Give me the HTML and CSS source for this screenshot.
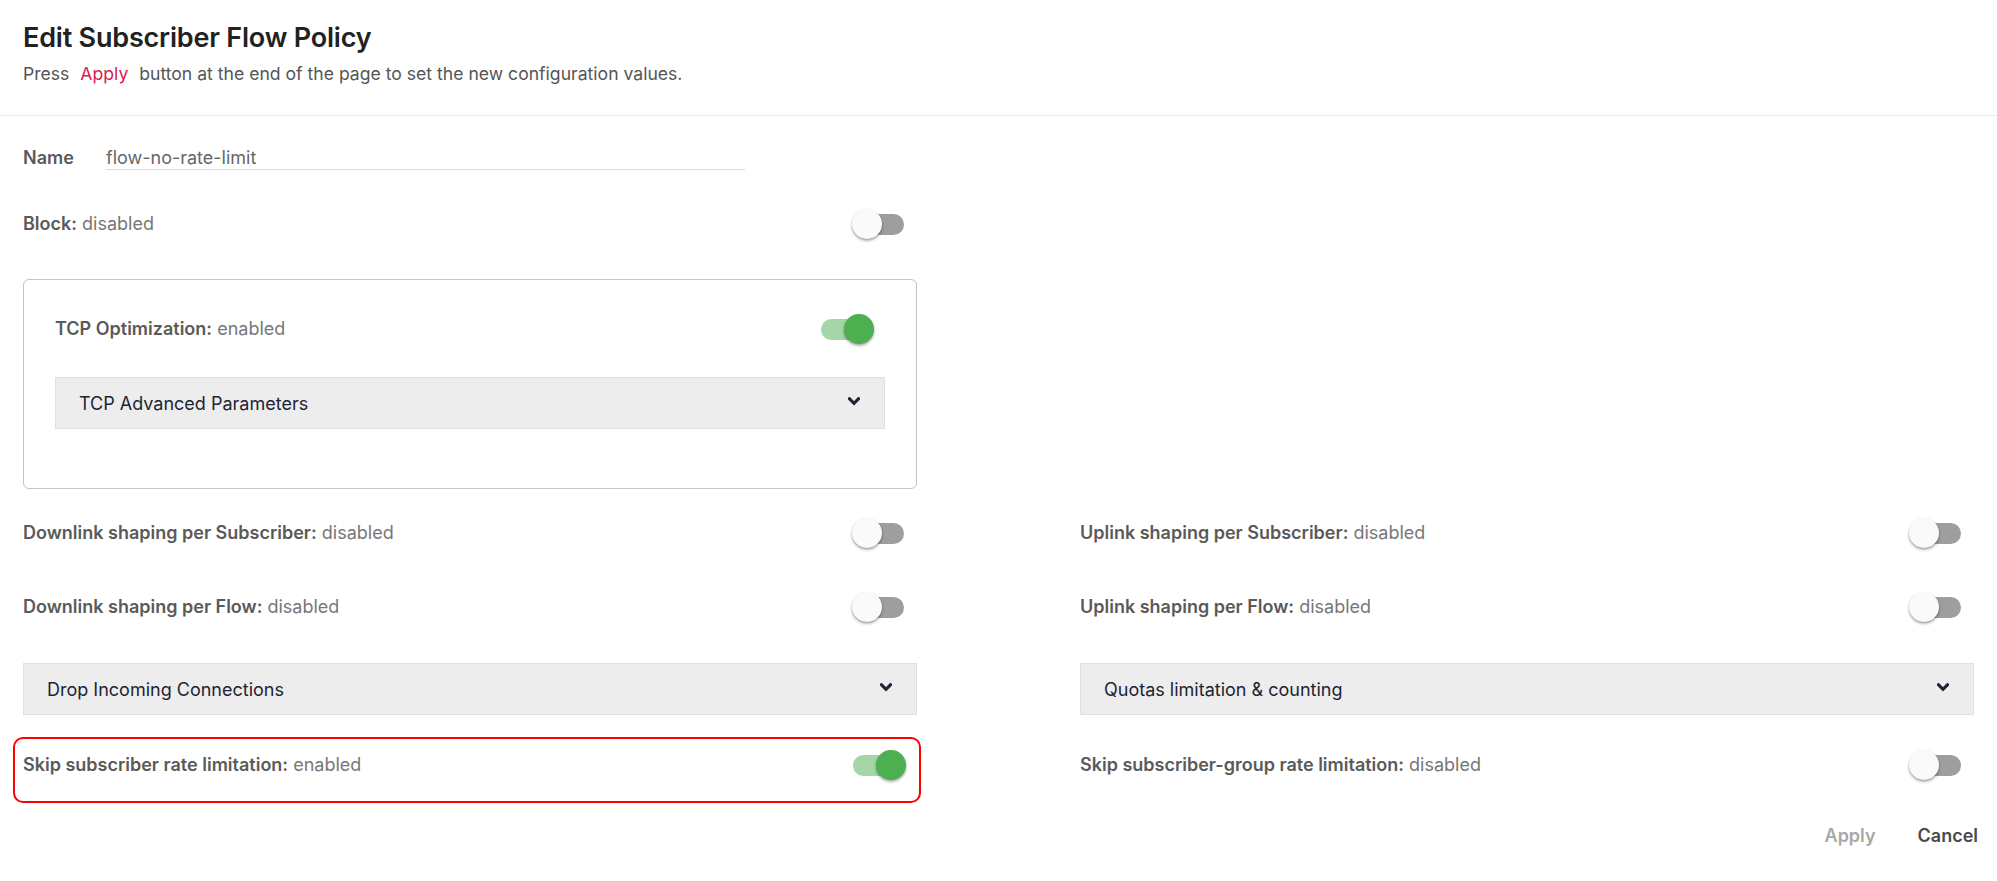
FILE: index.html
```html
<!DOCTYPE html>
<html lang="en">
<head>
<meta charset="utf-8">
<title>Edit Subscriber Flow Policy</title>
<link rel="stylesheet" href="styles.css">
</head>
<body>
<header class="page-header">
  <h1 class="title">Edit Subscriber Flow Policy</h1>
  <p class="subtitle">Press <span class="link">Apply</span> button at the end of the page to set the new configuration values.</p>
</header>
<main class="form">
  <section class="grid2">
    <div class="col">
      <div class="name-row">
        <label class="name-label" for="name">Name</label>
        <input class="name-input" id="name" value="flow-no-rate-limit">
      </div>
      <div class="toggle-row block-row">
        <span class="label"><b>Block:</b> disabled</span>
        <span class="switch"><span class="track"></span><span class="thumb"></span></span>
      </div>
      <div class="card">
        <div class="toggle-row">
          <span class="label"><b>TCP Optimization:</b> enabled</span>
          <span class="switch on"><span class="track"></span><span class="thumb"></span></span>
        </div>
        <div class="dropdown card-dropdown">
          <span>TCP Advanced Parameters</span>
          <svg class="chev" width="12" height="9" viewBox="0 0 12 9"><polyline points="1.5,1.8 6,6.3 10.5,1.8" fill="none" stroke="#1e2433" stroke-width="3.2" stroke-linecap="square"/></svg>
        </div>
      </div>
    </div>
    <div class="col"></div>
  </section>

  <section class="grid2 pair-1">
    <div class="toggle-row">
      <span class="label"><b>Downlink shaping per Subscriber:</b> disabled</span>
      <span class="switch"><span class="track"></span><span class="thumb"></span></span>
    </div>
    <div class="toggle-row">
      <span class="label"><b>Uplink shaping per Subscriber:</b> disabled</span>
      <span class="switch"><span class="track"></span><span class="thumb"></span></span>
    </div>
  </section>

  <section class="grid2 pair-2">
    <div class="toggle-row">
      <span class="label"><b>Downlink shaping per Flow:</b> disabled</span>
      <span class="switch"><span class="track"></span><span class="thumb"></span></span>
    </div>
    <div class="toggle-row">
      <span class="label"><b>Uplink shaping per Flow:</b> disabled</span>
      <span class="switch"><span class="track"></span><span class="thumb"></span></span>
    </div>
  </section>

  <section class="grid2 pair-3">
    <div class="dropdown">
      <span>Drop Incoming Connections</span>
      <svg class="chev" width="12" height="9" viewBox="0 0 12 9"><polyline points="1.5,1.8 6,6.3 10.5,1.8" fill="none" stroke="#1e2433" stroke-width="3.2" stroke-linecap="square"/></svg>
    </div>
    <div class="dropdown">
      <span>Quotas limitation &amp; counting</span>
      <svg class="chev" width="12" height="9" viewBox="0 0 12 9"><polyline points="1.5,1.8 6,6.3 10.5,1.8" fill="none" stroke="#1e2433" stroke-width="3.2" stroke-linecap="square"/></svg>
    </div>
  </section>

  <section class="grid2 pair-4">
    <div class="toggle-row highlighted">
      <span class="label"><b>Skip subscriber rate limitation:</b> enabled</span>
      <span class="switch on"><span class="track"></span><span class="thumb"></span></span>
    </div>
    <div class="toggle-row">
      <span class="label"><b>Skip subscriber-group rate limitation:</b> disabled</span>
      <span class="switch"><span class="track"></span><span class="thumb"></span></span>
    </div>
  </section>

  <footer class="actions">
    <button class="btn btn-apply" type="button">Apply</button>
    <button class="btn btn-cancel" type="button">Cancel</button>
  </footer>
</main>
</body>
</html>
```

FILE: styles.css
```css
* { box-sizing: border-box; }

body {
  margin: 0;
  background: #ffffff;
  font-family: Inter, "Liberation Sans", Arial, sans-serif;
  color: #333333;
}

.page-header {
  padding: 22px 23px 29px;
  border-bottom: 1px solid #e8e8e8;
}

.title {
  margin: 0;
  font-size: 27px;
  line-height: 32px;
  font-weight: 600;
  color: #222222;
  letter-spacing: -0.2px;
}

.subtitle {
  margin: 8px 0 0;
  font-size: 17.6px;
  line-height: 24px;
  color: #555555;
}

.link {
  color: #d6204e;
  padding: 0 6px;
}

.form {
  padding: 0 23px;
  display: flex;
  flex-direction: column;
}

.grid2 {
  display: grid;
  grid-template-columns: 1fr 1fr;
  column-gap: 163px;
}

.name-row {
  margin-top: 29px;
  display: flex;
  align-items: flex-end;
  height: 25px;
}

.name-label {
  width: 83px;
  font-size: 18px;
  line-height: 24px;
  font-weight: 600;
  color: #5a5a5a;
}

.name-input {
  width: 639px;
  height: 25px;
  padding: 0;
  border: none;
  border-bottom: 1px solid #dcdcdc;
  outline: none;
  font-family: inherit;
  font-size: 18px;
  line-height: 24px;
  color: #666666;
  background: transparent;
}

.toggle-row {
  display: flex;
  align-items: center;
  justify-content: space-between;
  height: 30px;
  padding-right: 11px;
}

.block-row { margin-top: 39px; }

.label {
  font-size: 18px;
  line-height: 24px;
  color: #777777;
}

.label b {
  font-weight: 600;
  color: #5a5a5a;
}

.switch {
  position: relative;
  flex: none;
  width: 54px;
  height: 30px;
}

.switch .track {
  position: absolute;
  left: 1px;
  top: 4.5px;
  width: 51px;
  height: 21px;
  border-radius: 11px;
  background: #9e9e9e;
}

.switch .thumb {
  position: absolute;
  left: 0;
  top: 0;
  width: 30px;
  height: 30px;
  border-radius: 50%;
  background: #fafafa;
  box-shadow: 0 2px 3px rgba(0, 0, 0, 0.25), 0 1px 2px rgba(0, 0, 0, 0.2);
}

.switch.on .track { background: #a5d6a7; }
.switch.on .thumb { left: 24px; background: #4caf50; }

.card {
  margin-top: 40px;
  height: 210px;
  border: 1px solid #c4c4c4;
  border-radius: 6px;
  padding: 34px 31px 0 31px;
}

.dropdown {
  height: 52px;
  border: 1px solid #e0e0e0;
  background: #ededed;
  display: flex;
  align-items: center;
  justify-content: space-between;
  padding: 0 24px 0 23px;
  font-size: 18px;
  color: #1e2433;
}

.card-dropdown { margin-top: 33px; }

.chev {
  flex: none;
  margin-top: -4px;
}

.pair-1 { margin-top: 29px; }
.pair-2 { margin-top: 44px; }
.pair-3 { margin-top: 41px; }
.pair-4 { margin-top: 35px; }

.highlighted { position: relative; }

.highlighted::before {
  content: "";
  position: absolute;
  left: -10px;
  right: -4px;
  top: -13px;
  bottom: -23px;
  border: 2px solid #ff0000;
  border-radius: 10px;
  pointer-events: none;
}

.actions {
  margin-top: 44px;
  margin-right: -4px;
  display: flex;
  justify-content: flex-end;
  gap: 42px;
}

.btn {
  padding: 0;
  border: none;
  background: none;
  font-family: inherit;
  font-size: 18px;
  line-height: 24px;
  font-weight: 600;
  cursor: pointer;
}

.btn-apply { color: #a8a8a8; }
.btn-cancel { color: #4a4a4a; }
```
